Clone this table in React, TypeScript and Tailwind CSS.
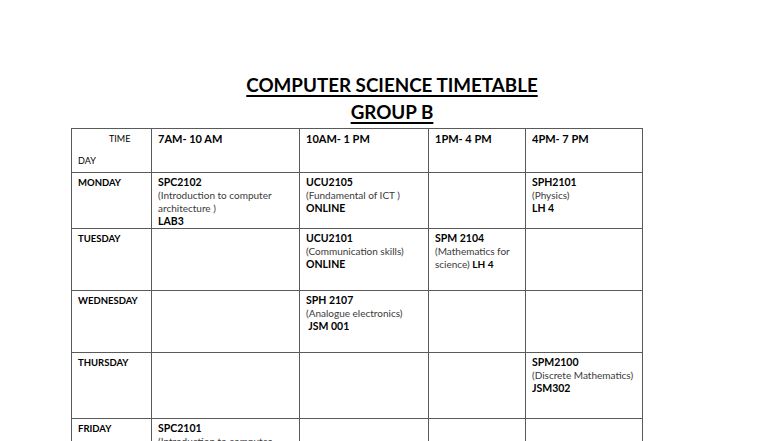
// Timetable page — title plus a bordered day/time grid
const COLS = ["7AM- 10 AM", "10AM- 1 PM", "1PM- 4 PM", "4PM- 7 PM"];

type Slot = { code: string; name?: string; room?: string; inline?: boolean } | null;

const ROWS: { day: string; h: string; slots: Slot[] }[] = [
  {
    day: "MONDAY",
    h: "h-[56px]",
    slots: [
      { code: "SPC2102", name: "(Introduction to computer architecture )", room: "LAB3" },
      { code: "UCU2105", name: "(Fundamental of  ICT )", room: "ONLINE" },
      null,
      { code: "SPH2101", name: "(Physics)", room: "LH 4" },
    ],
  },
  {
    day: "TUESDAY",
    h: "h-[62px]",
    slots: [
      null,
      { code: "UCU2101", name: "(Communication skills)", room: "ONLINE" },
      { code: "SPM 2104", name: "(Mathematics for science)", room: "LH 4", inline: true },
      null,
    ],
  },
  {
    day: "WEDNESDAY",
    h: "h-[62px]",
    slots: [null, { code: "SPH 2107", name: "(Analogue electronics)", room: " JSM 001" }, null, null],
  },
  {
    day: "THURSDAY",
    h: "h-[66px]",
    slots: [null, null, null, { code: "SPM2100", name: "(Discrete Mathematics)", room: "JSM302" }],
  },
  {
    day: "FRIDAY",
    h: "h-[60px]",
    slots: [{ code: "SPC2101", name: "(Introduction to computer programming)" }, null, null, null],
  },
];

const cell = "border border-[#5a5a5a] align-top px-[6px] pt-[3px]";

function SlotCell({ s }: { s: Slot }) {
  if (!s) return null;
  return (
    <div className="leading-[13px]">
      <div className="font-bold text-[10.5px]">{s.code}</div>
      {s.inline ? (
        <div className="text-[10px] text-[#3a3a3a]">
          {s.name} <span className="font-bold text-black">{s.room}</span>
        </div>
      ) : (
        <>
          <div className="text-[10px] text-[#3a3a3a]">{s.name}</div>
          {s.room && <div className="font-bold text-[10.5px] whitespace-pre">{s.room}</div>}
        </>
      )}
    </div>
  );
}

export default function App() {
  return (
    <div
      className="w-[784px] h-[441px] overflow-hidden bg-white text-black"
      style={{ fontFamily: "Lato, 'Open Sans', sans-serif" }}
    >
      {/* Title */}
      <div className="pt-[71px] flex flex-col items-center font-bold text-[18.8px] leading-[27px]">
        <span className="underline decoration-[1.5px] underline-offset-[3px]">COMPUTER SCIENCE TIMETABLE</span>
        <span className="underline decoration-[1.5px] underline-offset-[3px]">GROUP B</span>
      </div>

      {/* Grid */}
      <table className="ml-[71px] mt-[3px] border-collapse table-fixed w-[571px] text-[9.5px]">
        <colgroup>
          <col className="w-[80px]" />
          <col className="w-[148px]" />
          <col className="w-[129px]" />
          <col className="w-[97px]" />
          <col className="w-[117px]" />
        </colgroup>
        <tbody>
          <tr className="h-[44px]">
            <td className={`${cell} pb-[1px]`}>
              <div className="flex flex-col h-[35px] justify-between text-[9px] leading-[12px] pt-[1px]">
                <span className="pl-[31px]">TIME</span>
                <span>DAY</span>
              </div>
            </td>
            {COLS.map((c) => (
              <td key={c} className={`${cell} font-bold text-[11px] leading-[13px]`}>
                {c}
              </td>
            ))}
          </tr>
          {ROWS.map((r) => (
            <tr key={r.day} className={r.h}>
              <td className={`${cell} font-bold leading-[13px]`}>{r.day}</td>
              {r.slots.map((s, i) => (
                <td key={i} className={cell}>
                  <SlotCell s={s} />
                </td>
              ))}
            </tr>
          ))}
        </tbody>
      </table>
    </div>
  );
}
